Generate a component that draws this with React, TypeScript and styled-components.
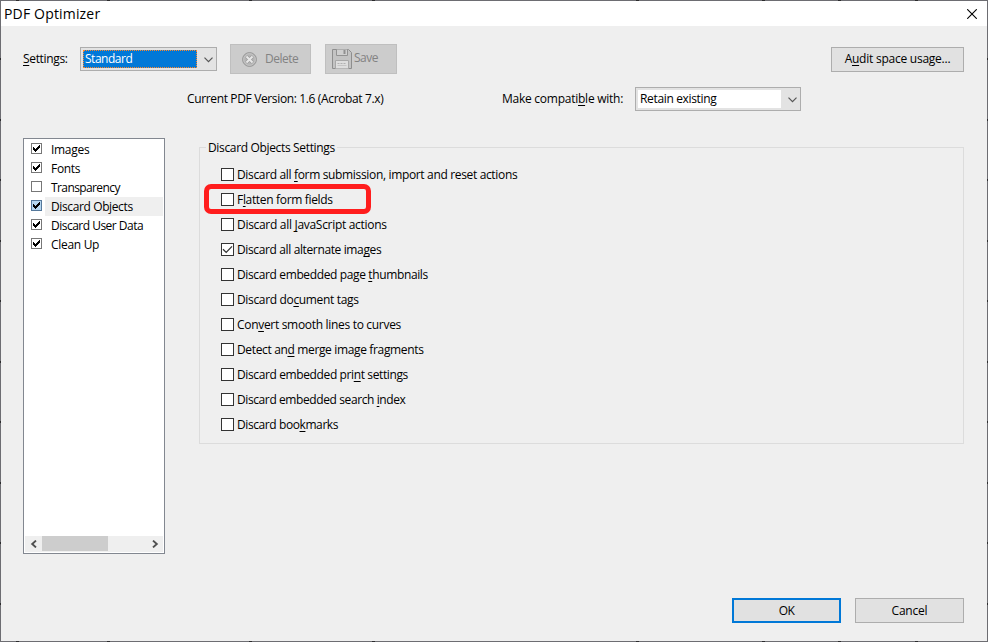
import React from "react";
import styled, { createGlobalStyle, css } from "styled-components";

const Global = createGlobalStyle`
  * { box-sizing: border-box; }
  body { margin: 0; background: #efefef; }
`;

const frameMark = (x: number) =>
  `linear-gradient(#2b2b2d, #2b2b2d) ${x}px 0 / 3px 100% no-repeat`;

const Frame = styled.div`
  width: 988px;
  height: 642px;
  padding: 1px;
  background:
    linear-gradient(#6d6d72, #6d6d72) center / 986px 640px no-repeat,
    repeating-linear-gradient(transparent 0 58px, #2b2b2d 58px 60px, transparent 60px 60.5px),
    ${[16, 107, 249, 372, 636, 762, 838, 915].map(frameMark).join(", ")},
    #6d6d72;
`;

const Dialog = styled.div`
  width: 986px;
  height: 640px;
  background: #efefef;
  color: #000;
  font: 12px/16px "Open Sans", "Noto Sans", sans-serif;
  overflow: hidden;
`;

const Label = styled.span<{ $fit?: number }>`
  display: inline-block;
  white-space: pre;
  letter-spacing: ${(p) => p.$fit ?? -0.34}px;
`;

const Key = styled.span`
  text-decoration: underline;
  text-decoration-thickness: 1px;
  text-underline-offset: 2px;
  text-decoration-skip-ink: none;
`;

const TitleBar = styled.header`
  display: flex;
  align-items: center;
  justify-content: space-between;
  height: 25px;
  padding: 0 10px 0 3px;
  background: #fff;
  font-size: 14px;
`;

const TopRow = styled.div`
  display: flex;
  align-items: center;
  height: 30px;
  margin-top: 18px;
  padding: 0 23px 0 22px;
`;

const VersionRow = styled.div`
  display: flex;
  align-items: center;
  height: 24px;
  margin-top: 13px;
  padding-left: 186px;
`;

const Slot = styled.div<{ $w: number }>`
  width: ${(p) => p.$w}px;
  flex: none;
  display: flex;
`;

const Select = styled.div<{ $w: number }>`
  display: flex;
  width: ${(p) => p.$w}px;
  height: 24px;
  padding: 2px;
  border: 1px solid #adadad;
  background: #e3e3e3;
`;

const SelectValue = styled.div<{ $focused?: boolean }>`
  flex: 1;
  height: 18px;
  padding-left: 2px;
  line-height: 18px;
  background: #fff;
  ${(p) =>
    p.$focused &&
    css`
      padding-left: 1px;
      line-height: 16px;
      border: 1px dotted #ff8728;
      background: #0078d7;
      color: #fff;
    `}
`;

const Arrow = styled.div`
  display: flex;
  width: 17px;
  padding: 1px 1px 0 0;
  align-items: center;
  justify-content: flex-end;
`;

const Button = styled.button<{ $w: number; $h?: number; $primary?: boolean }>`
  display: flex;
  align-items: center;
  justify-content: center;
  width: ${(p) => p.$w}px;
  height: ${(p) => p.$h ?? 25}px;
  padding: 0;
  border: ${(p) => (p.$primary ? "2px solid #0078d7" : "1px solid #adadad")};
  background: #e1e1e1;
  color: #000;
  font: inherit;
  &:disabled {
    justify-content: flex-start;
    border-color: #bfbfbf;
    background: #cccccc;
    color: #838383;
  }
`;

const Audit = styled(Button)`
  margin-left: auto;
`;

const Main = styled.div`
  display: flex;
  align-items: flex-start;
  margin-top: 27px;
  padding: 0 23px 0 22px;
`;

const List = styled.div`
  display: flex;
  flex-direction: column;
  width: 142px;
  height: 416px;
  padding: 1px;
  border: 1px solid #828790;
  background: #fff;
`;

const ListRow = styled.div`
  display: flex;
  align-items: center;
  height: 19px;
  padding-left: 6px;
`;

const ListBox = styled.span<{ $active?: boolean }>`
  display: flex;
  width: 11px;
  height: 11px;
  margin: -2px 3px 0 0;
  border: 1px solid ${(p) => (p.$active ? "#55789b" : "#777")};
  background: ${(p) => (p.$active ? "#b5d6f0" : "#fff")};
`;

const ListText = styled.div<{ $active?: boolean }>`
  flex: 1;
  height: 19px;
  padding-left: 6px;
  line-height: 19px;
  background: ${(p) => (p.$active ? "#efefef" : "transparent")};
`;

const ScrollBar = styled.div`
  display: flex;
  align-items: center;
  height: 16px;
  margin-top: auto;
  background: #efefef;
`;

const ScrollButton = styled.div`
  display: flex;
  width: 17px;
  padding-left: 5px;
  & + & , div + & { padding-left: 6px; }
`;

const Thumb = styled.div`
  width: 66px;
  height: 15px;
  margin: 0 auto 1px 0;
  background: #cdcdcd;
`;

const Group = styled.fieldset`
  width: 765px;
  height: 305px;
  margin: 1px 0 0 34px;
  padding: 6px 0 0 5px;
  border: 1px solid #dcdcdc;
`;

const Legend = styled.legend`
  height: 17px;
  margin-left: 1px;
  padding: 0 2px;
  line-height: 17px;
`;

const Option = styled.div<{ $marked?: boolean }>`
  display: flex;
  align-items: center;
  height: 25px;
  padding-left: 16px;
  ${(p) =>
    p.$marked &&
    css`
      width: 167px;
      height: 30px;
      margin: -3px 0 -2px -1px;
      padding: 1px 0 0 12px;
      border: 5px solid #ff1d1d;
      border-radius: 7px;
    `}
`;

const Box = styled.span`
  display: flex;
  width: 13px;
  height: 13px;
  margin-right: 3px;
  border: 1px solid #333;
  background: #fff;
`;

const Footer = styled.footer`
  display: flex;
  justify-content: flex-end;
  gap: 14px;
  margin-top: 44px;
  padding-right: 23px;
`;

const Chevron = () => (
  <svg width="9" height="6" viewBox="0 0 9 6" fill="none" stroke="#555" strokeWidth="1.2">
    <path d="M.5 .7 4.5 4.7 8.5 .7" />
  </svg>
);

const ScrollArrow = ({ right }: { right?: boolean }) => (
  <svg width="7" height="8" viewBox="0 0 7 8" fill="none" stroke="#505050" strokeWidth="1.9">
    <path d={right ? "M1 .6 4.8 4 1 7.4" : "M6 .6 2.2 4 6 7.4"} />
  </svg>
);

const ListTick = () => (
  <svg width="9" height="9" viewBox="0 0 9 9" shapeRendering="crispEdges">
    <path d="M1 3h1v1h1v1h1V4h1V3h1V2h1V1h1v3H7v1H6v1H5v1H4v1H3V7H2V6H1z" />
  </svg>
);

const Tick = () => (
  <svg width="11" height="11" viewBox="0 0 11 11" fill="none" stroke="#333" strokeWidth="1.3">
    <path d="M1 5.2 4.2 8.4 10 2.4" />
  </svg>
);

const CloseIcon = () => (
  <svg width="10" height="10" viewBox="0 0 10 10" stroke="#000" strokeWidth="1.1">
    <path d="M.2 .2 9.8 9.8M9.8 .2 .2 9.8" />
  </svg>
);

const DeleteIcon = () => (
  <svg width="15" height="15" viewBox="0 0 15 15" fill="none">
    <circle cx="7.5" cy="7.5" r="6.9" fill="#b5b5b5" stroke="#959595" />
    <circle cx="7.5" cy="7.5" r="5.8" stroke="#c5c5c5" />
    <path d="m4.5 4.5 6 6m0-6-6 6" stroke="#9b9b9b" strokeWidth="3.4" />
    <path d="m4.5 4.5 6 6m0-6-6 6" stroke="#e7e7e7" strokeWidth="2" />
  </svg>
);

const SaveIcon = () => (
  <svg width="20" height="20" viewBox="0 0 20 20" fill="none">
    <path d="M.5 .5h16l3 3v16H.5z" fill="#c3c3c3" stroke="#8e8e8e" />
    <path d="M4.5 .5v6h11v-6" fill="#cfcfcf" stroke="#929292" />
    <path d="M11.5 1h2v4h-2z" fill="#909090" />
    <path d="M3.5 19.5v-8h13v8" fill="#dedede" stroke="#a8a8a8" />
    <path d="M5.5 14.5h9" stroke="#b0b0b0" strokeDasharray="2 1" />
    <path d="M5.5 16.5h9" stroke="#c5c5c5" />
  </svg>
);

const DeleteButton = styled(Button)`
  margin-left: 13px;
  padding: 0 0 1px 11px;
  gap: 8px;
  svg { margin-top: 1px; }
`;

const SaveButton = styled(Button)`
  margin-left: 14px;
  padding: 0 0 3px 6px;
  gap: 2px;
  svg { flex: none; margin-top: 3px; }
`;

const categories = [
  { name: "Images", on: true, fit: -0.3 },
  { name: "Fonts", on: true, fit: -0.3 },
  { name: "Transparency", on: false, fit: -0.6 },
  { name: "Discard Objects", on: true, active: true, fit: -0.38 },
  { name: "Discard User Data", on: true, fit: -0.51 },
  { name: "Clean Up", on: true, fit: -0.3 },
];

const options = [
  { pre: "Discard all ", key: "f", post: "orm submission, import and reset actions", fit: -0.34 },
  { pre: "F", key: "l", post: "atten form fields", marked: true, fit: -0.33 },
  { pre: "Discard all ", key: "J", post: "avaScript actions", fit: -0.3 },
  { pre: "Discard all alternate ima", key: "g", post: "es", on: true, fit: -0.37 },
  { pre: "Discard embedded page ", key: "t", post: "humbnails", fit: -0.37 },
  { pre: "Discard do", key: "c", post: "ument tags", fit: -0.34 },
  { pre: "Con", key: "v", post: "ert smooth lines to curves", fit: -0.31 },
  { pre: "Detect an", key: "d", post: " merge image fragments", fit: -0.35 },
  { pre: "Discard embedded pri", key: "n", post: "t settings", fit: -0.38 },
  { pre: "Discard embedded search ", key: "i", post: "ndex", fit: -0.4 },
  { pre: "Discard boo", key: "k", post: "marks", fit: -0.41 },
];

export default function App() {
  return (
    <Frame>
      <Global />
      <Dialog>
        <TitleBar>
          <Label $fit={0.17}>PDF Optimizer</Label>
          <CloseIcon />
        </TitleBar>
        <TopRow>
          <Slot $w={57}><Label><Key>S</Key>ettings:</Label></Slot>
          <Select $w={137}>
            <SelectValue $focused><Label $fit={-0.48}>Standard</Label></SelectValue>
            <Arrow><Chevron /></Arrow>
          </Select>
          <DeleteButton $w={81} $h={30} disabled><DeleteIcon /><Label $fit={-0.5}>Delete</Label></DeleteButton>
          <SaveButton $w={72} $h={30} disabled><SaveIcon /><Label $fit={-0.5}>Save</Label></SaveButton>
          <Audit $w={133}><Label $fit={-0.24}>A<Key>u</Key>dit space usage...</Label></Audit>
        </TopRow>
        <VersionRow>
          <Slot $w={315}><Label $fit={-0.36}>Current PDF Version: 1.6 (Acrobat 7.x)</Label></Slot>
          <Slot $w={133}><Label $fit={-0.25}>Make compati<Key>b</Key>le with:</Label></Slot>
          <Select $w={166}>
            <SelectValue><Label>Retain existing</Label></SelectValue>
            <Arrow><Chevron /></Arrow>
          </Select>
        </VersionRow>
        <Main>
          <List>
            {categories.map((c) => (
              <ListRow key={c.name}>
                <ListBox $active={c.active}>{c.on && <ListTick />}</ListBox>
                <ListText $active={c.active}><Label $fit={c.fit}>{c.name}</Label></ListText>
              </ListRow>
            ))}
            <ScrollBar>
              <ScrollButton><ScrollArrow /></ScrollButton>
              <Thumb />
              <ScrollButton><ScrollArrow right /></ScrollButton>
            </ScrollBar>
          </List>
          <Group>
            <Legend><Label>Discard Objects Settings</Label></Legend>
            {options.map((o) => (
              <Option key={o.pre + o.key} $marked={o.marked}>
                <Box>{o.on && <Tick />}</Box>
                <Label $fit={o.fit}>{o.pre}<Key>{o.key}</Key>{o.post}</Label>
              </Option>
            ))}
          </Group>
        </Main>
        <Footer>
          <Button $w={109} $primary><Label $fit={-0.5}>OK</Label></Button>
          <Button $w={109}><Label $fit={-0.2}>Cancel</Label></Button>
        </Footer>
      </Dialog>
    </Frame>
  );
}
